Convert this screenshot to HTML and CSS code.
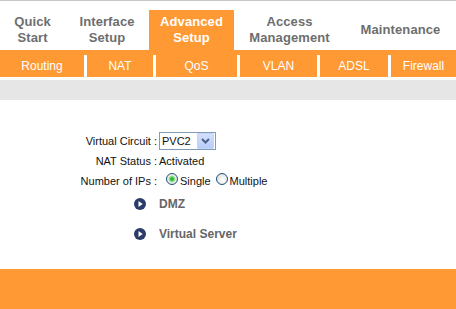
FILE: index.html
```html
<!DOCTYPE html>
<html>
<head>
<meta charset="utf-8">
<link rel="stylesheet" href="styles.css">
</head>
<body>
<div class="topline"></div>
<nav class="tabs">
  <div class="tab">Quick<br>Start</div>
  <div class="tab">Interface<br>Setup</div>
  <div class="tab tab-active">Advanced<br>Setup</div>
  <div class="tab">Access<br>Management</div>
  <div class="tab">Maintenance</div>
</nav>
<nav class="subnav">
  <a href="#">Routing</a>
  <a href="#">NAT</a>
  <a href="#">QoS</a>
  <a href="#">VLAN</a>
  <a href="#">ADSL</a>
  <a href="#">Firewall</a>
</nav>
<div class="graybar"></div>
<main class="content">
  <div class="form">
    <div class="label">Virtual Circuit :</div>
    <div class="value">
      <div class="select">
        <span class="select-text">PVC2</span>
        <span class="select-btn"><svg width="9" height="6" viewBox="0 0 9 6"><polyline points="1,1 4.5,4.5 8,1" fill="none" stroke="#4d6185" stroke-width="2"/></svg></span>
      </div>
    </div>
    <div class="label">NAT Status :</div>
    <div class="value">Activated</div>
    <div class="label">Number of IPs :</div>
    <div class="value radios">
      <label class="opt"><input type="radio" name="ips" checked><span>Single</span></label>
      <label class="opt"><input type="radio" name="ips"><span>Multiple</span></label>
    </div>
  </div>
  <ul class="links">
    <li><svg width="12" height="12" viewBox="0 0 12 12"><circle cx="6" cy="6" r="6" fill="#2b3c6b"/><path d="M4.5 3.1 L8.7 6 L4.5 8.9 Z" fill="#fff"/></svg><span>DMZ</span></li>
    <li><svg width="12" height="12" viewBox="0 0 12 12"><circle cx="6" cy="6" r="6" fill="#2b3c6b"/><path d="M4.5 3.1 L8.7 6 L4.5 8.9 Z" fill="#fff"/></svg><span>Virtual Server</span></li>
  </ul>
</main>
<footer class="footer"></footer>
</body>
</html>
```
FILE: styles.css
```css
body {
  margin: 0;
  width: 456px;
  height: 309px;
  overflow: hidden;
  background: #fff;
  font-family: "Liberation Sans", Arial, sans-serif;
}

.topline {
  height: 1px;
  background: #c8c8c8;
}

.tabs {
  display: grid;
  grid-template-columns: 65px 84px 85px 111px 1fr;
  height: 40px;
  margin-top: 9px;
}

.tab {
  display: flex;
  align-items: center;
  justify-content: center;
  text-align: center;
  font-weight: bold;
  font-size: 13px;
  line-height: 16px;
  letter-spacing: 0.1px;
  color: #6e6e6e;
}

.tab-active {
  background: #ff9933;
  color: #fff;
}

.subnav {
  display: grid;
  grid-template-columns: 84px 69px 84px 80px 71px 1fr;
  height: 27px;
  box-sizing: border-box;
  padding-top: 5px;
  background: #ff9933;
}

.subnav a {
  color: #fff;
  font-size: 12px;
  line-height: 22px;
  text-align: center;
  text-decoration: none;
}

.subnav a + a {
  border-left: 3px solid #fff;
}

.graybar {
  height: 20px;
  margin-top: 3px;
  background: #e6e6e6;
}

.content {
  height: 169px;
  box-sizing: border-box;
  padding-top: 30px;
}

.form {
  display: grid;
  grid-template-columns: 157px auto;
  grid-template-rows: 22px 18px 22px;
  column-gap: 2px;
  font-size: 11px;
  line-height: 13px;
  color: #111;
}

.label {
  text-align: right;
  align-self: center;
}

.value {
  display: flex;
  align-items: center;
}

.select {
  width: 57px;
  height: 18px;
  box-sizing: border-box;
  border: 1px solid #7f9db9;
  display: flex;
  align-items: center;
  justify-content: space-between;
  padding: 0 1px 0 2px;
  background: #fff;
}

.select-text {
  font-size: 11px;
}

.select-btn {
  width: 17px;
  height: 16px;
  box-sizing: border-box;
  display: flex;
  align-items: center;
  justify-content: center;
  background: linear-gradient(#d3e0fd, #b9cdf9);
  border: 1px solid #c4d4f7;
  border-radius: 1px;
}

.radios {
  padding-left: 7px;
  gap: 5px;
}

.opt {
  display: inline-flex;
  align-items: center;
}

.opt input {
  appearance: none;
  -webkit-appearance: none;
  width: 12px;
  height: 12px;
  margin: 0 2px 4px 0;
  border: 1px solid #1c5180;
  border-radius: 50%;
  box-sizing: border-box;
  background: radial-gradient(circle at 60% 60%, #ffffff 0, #e4e4de 70%, #d0d0c8 100%);
}

.opt input:checked {
  background: radial-gradient(circle, #1fae1f 0, #3fc23f 1.5px, #a8e4a8 3px, #f2f2ec 4px, #d6d6ce 100%);
}

.links {
  list-style: none;
  margin: 0;
  padding: 0 0 0 134px;
  display: flex;
  flex-direction: column;
  gap: 6px;
}

.links li {
  display: flex;
  align-items: center;
  gap: 13px;
  height: 24px;
  font-size: 12px;
  font-weight: bold;
  color: #666;
}

.footer {
  height: 40px;
  background: #ff9933;
}
```
